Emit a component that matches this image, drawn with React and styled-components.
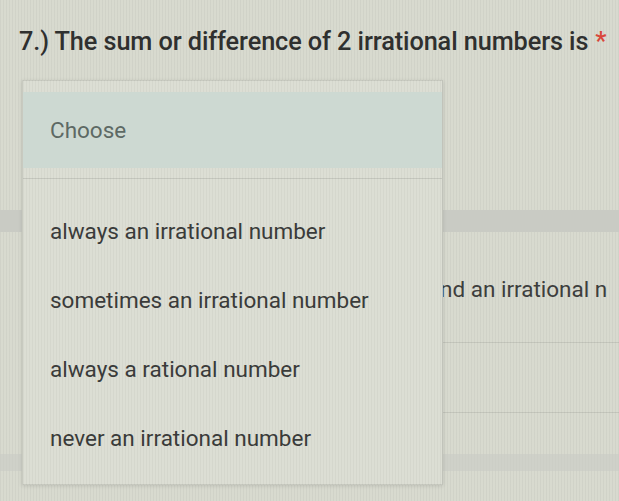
import React from "react";
import styled, { createGlobalStyle } from "styled-components";

const GlobalStyle = createGlobalStyle`
  html, body {
    margin: 0;
    padding: 0;
    background: #d8dacf;
  }
  body {
    font-family: Roboto, "Liberation Sans", sans-serif;
  }
`;

const options = [
  "always an irrational number",
  "sometimes an irrational number",
  "always a rational number",
  "never an irrational number",
];

const Page = styled.div`
  position: relative;
  width: 619px;
  height: 501px;
  overflow: hidden;
  background-color: #d8dacf;
  background-image: repeating-linear-gradient(
    90deg,
    rgba(0, 0, 0, 0.035) 0 1px,
    transparent 1px 3px
  );
`;

const Title = styled.h2`
  margin: 0;
  padding: 27px 0 0 19px;
  font-size: 25.3px;
  font-weight: 500;
  line-height: 30px;
  color: #2f302f;
  white-space: nowrap;
  letter-spacing: -0.1px;
`;

const Required = styled.span`
  color: #d9473a;
  margin-left: 7px;
`;

/* content of the form that sits under the open menu */
const Behind = styled.div`
  display: flex;
  flex-direction: column;
  padding-top: 153px;
`;

const Band = styled.div`
  display: flex;
  justify-content: space-between;
  height: ${({ h }) => h}px;
  margin-top: ${({ gap }) => gap}px;
`;

const Block = styled.div`
  width: ${({ w }) => w}px;
  background: #c9cbc4;
  opacity: ${({ faint }) => (faint ? 0.55 : 1)};
`;

const PartLine = styled.div`
  margin-top: 44px;
  margin-left: 440px;
  overflow: hidden;
  font-size: 22.5px;
  color: #3d3e3d;
  white-space: nowrap;
  line-height: 26px;
`;

const Rule = styled.div`
  margin-top: ${({ gap }) => gap}px;
  margin-left: 440px;
  height: 1px;
  background: rgba(0, 0, 0, 0.09);
`;

const Menu = styled.div`
  position: absolute;
  left: 22px;
  top: 80px;
  width: 419px;
  height: 403px;
  background: #dcded4;
  border: 1px solid rgba(0, 0, 0, 0.09);
  box-shadow: 0 1px 4px rgba(0, 0, 0, 0.12);
  display: flex;
  flex-direction: column;
  background-image: repeating-linear-gradient(
    90deg,
    rgba(0, 0, 0, 0.03) 0 1px,
    transparent 1px 3px
  );
`;

const Placeholder = styled.div`
  margin-top: 11px;
  height: 76px;
  display: flex;
  align-items: center;
  padding-left: 27px;
  background: #cdd9d2;
  font-size: 22.5px;
  color: #5d6964;
`;

const Divider = styled.div`
  margin-top: 10px;
  height: 1px;
  background: rgba(0, 0, 0, 0.1);
`;

const OptionList = styled.div`
  display: flex;
  flex-direction: column;
  padding-top: 17px;
`;

const Option = styled.div`
  height: 69px;
  display: flex;
  align-items: center;
  padding-left: 27px;
  font-size: 22.5px;
  color: #3a3b3a;
  white-space: nowrap;
`;

export default function App() {
  return (
    <>
      <GlobalStyle />
      <Page>
        <Title>
          7.) The sum or difference of 2 irrational numbers is
          <Required>*</Required>
        </Title>
        <Behind>
          <Band h={22} gap={0}>
            <Block w={22} />
            <Block w={176} />
          </Band>
          <PartLine>nd an irrational n</PartLine>
          <Rule gap={40} />
          <Rule gap={69} />
          <Band h={17} gap={41}>
            <Block w={22} faint />
            <Block w={176} faint />
          </Band>
        </Behind>
        <Menu>
          <Placeholder>Choose</Placeholder>
          <Divider />
          <OptionList>
            {options.map((o) => (
              <Option key={o}>{o}</Option>
            ))}
          </OptionList>
        </Menu>
      </Page>
    </>
  );
}
